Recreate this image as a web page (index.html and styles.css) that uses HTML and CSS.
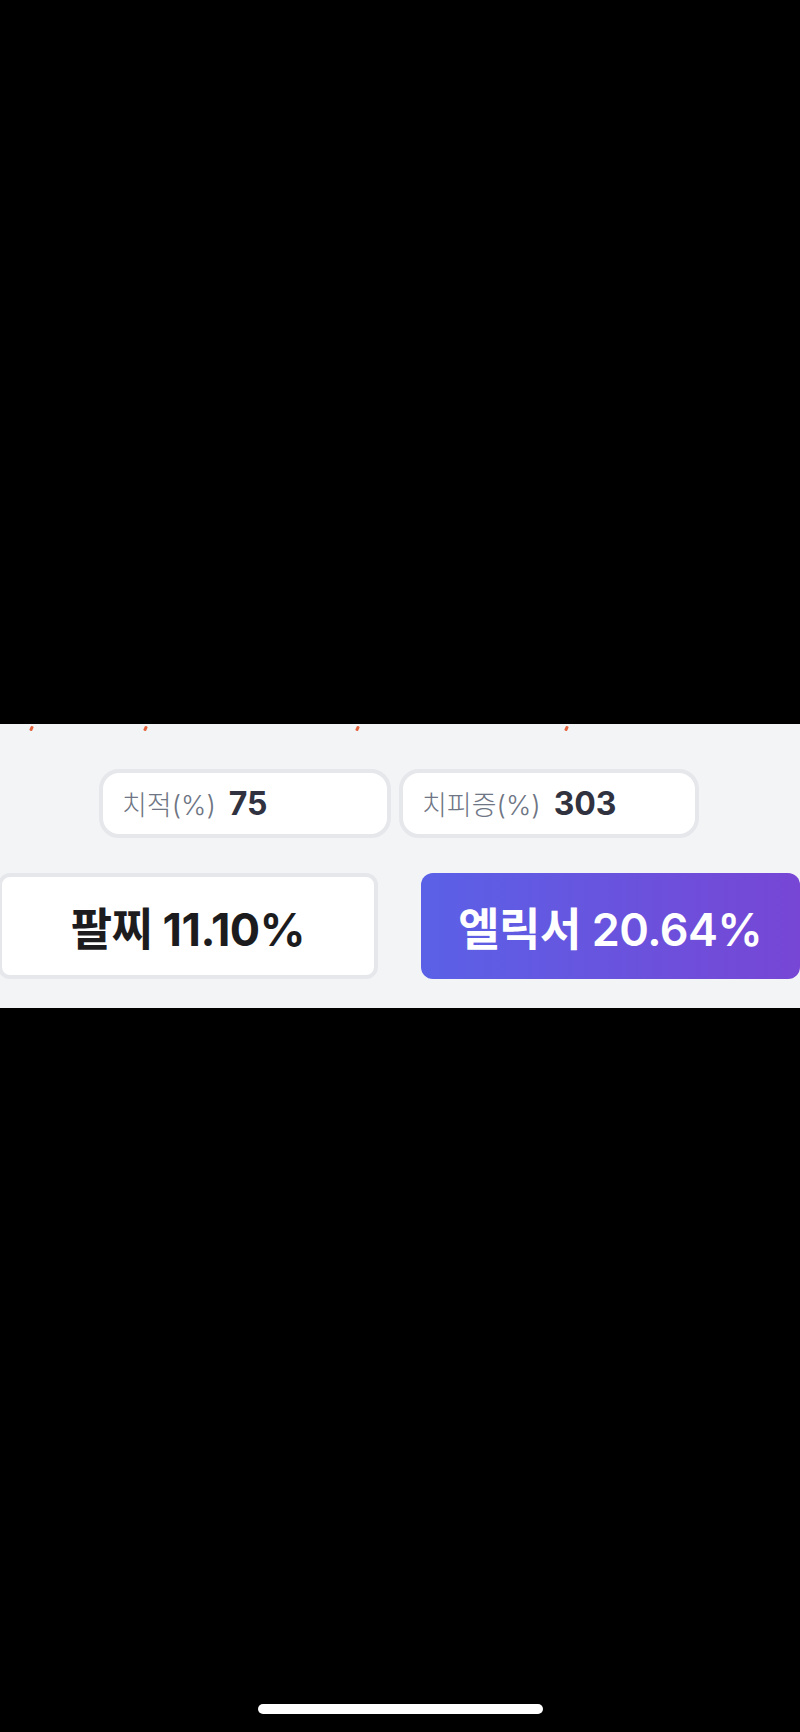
FILE: index.html
```html
<!DOCTYPE html>
<html lang="ko">
<head>
    <meta charset="UTF-8">
    <meta name="viewport" content="width=device-width, initial-scale=1.0">
    <title>결과</title>
    <link rel="stylesheet" href="styles.css">
</head>
<body>
    <div class="top-black"></div>

    <section class="panel">
        <div class="chart-edge">
            <span class="tick" style="left: 30px"></span>
            <span class="tick" style="left: 144px"></span>
            <span class="tick" style="left: 356px"></span>
            <span class="tick" style="left: 565px"></span>
        </div>

        <div class="stats">
            <div class="stat">
                <span class="stat-label">치적(%)</span>
                <span class="stat-value">75</span>
            </div>
            <div class="stat">
                <span class="stat-label">치피증(%)</span>
                <span class="stat-value">303</span>
            </div>
        </div>

        <div class="results">
            <div class="result result-plain">팔찌 11.10%</div>
            <div class="result result-best">엘릭서 20.64%</div>
        </div>
    </section>

    <div class="bottom-black">
        <div class="home-bar"></div>
    </div>
</body>
</html>
```

FILE: styles.css
```css
* {
  box-sizing: border-box;
}
body {
  margin: 0;
  background-color: #000;
  font-family: Inter, "Noto Sans CJK KR", sans-serif;
  overflow: hidden;
}
.top-black {
  height: 724px;
}
.panel {
  background-color: #f3f4f6;
  height: 284px;
  overflow: hidden;
}
.chart-edge {
  position: relative;
  height: 45px;
}
.tick {
  position: absolute;
  top: 2px;
  width: 3px;
  height: 5px;
  border-radius: 1px;
  background-color: #e4643f;
  transform: rotate(25deg);
}
.stats {
  display: grid;
  grid-template-columns: 292px 300px;
  gap: 8px;
  justify-content: center;
  margin-left: -2px;
}
.stat {
  display: flex;
  align-items: center;
  gap: 13px;
  height: 69px;
  padding: 0 19px;
  background-color: #fff;
  border: 4px solid #e5e7eb;
  border-radius: 20px;
}
.stat-label {
  font-size: 27px;
  font-weight: 300;
  color: #6e7584;
}
.stat-value {
  font-size: 32px;
  font-weight: 700;
  color: #30323f;
}
.results {
  display: grid;
  grid-template-columns: 1fr 1fr;
  gap: 43px;
  width: 802px;
  margin: 35px 0 0 -2px;
}
.result {
  display: flex;
  align-items: center;
  justify-content: center;
  height: 106px;
  border-radius: 12px;
  font-size: 45px;
  letter-spacing: -0.5px;
}
.result-plain {
  background-color: #fff;
  border: 4px solid #e5e7eb;
  color: #1c1c1e;
  font-weight: 700;
}
.result-best {
  background: linear-gradient(90deg, #5a61e7, #7746d5);
  color: #fff;
  font-weight: 600;
}
.bottom-black {
  height: 724px;
  display: flex;
  justify-content: center;
}
.home-bar {
  margin-top: 696px;
  width: 285px;
  height: 10px;
  border-radius: 5px;
  background-color: #fff;
}
```
